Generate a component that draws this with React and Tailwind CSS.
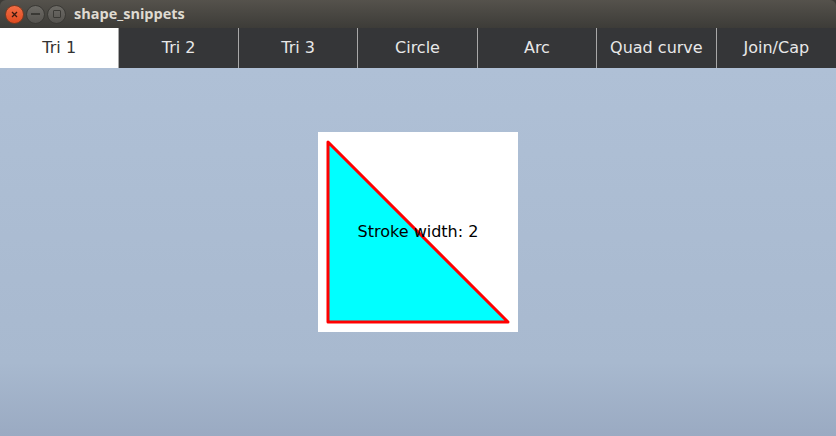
import React from "react";

const tabs = ["Tri 1", "Tri 2", "Tri 3", "Circle", "Arc", "Quad curve", "Join/Cap"];

export default function App() {
  return (
    <div className="w-[836px] h-[436px] flex flex-col overflow-hidden bg-[#3c3b37]" style={{ fontFamily: '"DejaVu Sans", sans-serif' }}>
      <div className="h-[28px] flex items-center pl-[5px] rounded-t-[6px] bg-gradient-to-b from-[#55524c] to-[#3d3c38]">
        <div className="flex items-center gap-[2px]">
          <div className="w-[19px] h-[19px] rounded-full bg-gradient-to-b from-[#f26d44] to-[#df4a1e] border border-[#7a3a22] flex items-center justify-center">
            <svg width="9" height="9" viewBox="0 0 9 9"><path d="M2 2 L7 7 M7 2 L2 7" stroke="#3a1a10" strokeWidth="1.3" /></svg>
          </div>
          <div className="w-[19px] h-[19px] rounded-full bg-gradient-to-b from-[#6d6b66] to-[#55534f] border border-[#3a3935] flex items-center justify-center">
            <div className="w-[9px] h-[2px] bg-[#3a3935]" />
          </div>
          <div className="w-[19px] h-[19px] rounded-full bg-gradient-to-b from-[#6d6b66] to-[#55534f] border border-[#3a3935] flex items-center justify-center">
            <div className="w-[8px] h-[8px] border border-[#3a3935] rounded-[1px]" />
          </div>
        </div>
        <span className="ml-[8px] text-[14.5px] font-bold text-[#dfdbd2] leading-none" style={{ fontFamily: '"Open Sans", sans-serif' }}>shape_snippets</span>
      </div>
      <div className="h-[40px] grid grid-cols-7 bg-[#353638]">
        {tabs.map((t, i) => (
          <div
            key={t}
            className={
              i === 0
                ? "flex items-center justify-center bg-white text-[#333] text-[16px] border-r border-[#a8a8a8]"
                : i < 6
                ? "flex items-center justify-center text-[#e8e8e8] text-[16px] border-r border-[#a8a8a8]"
                : "flex items-center justify-center text-[#e8e8e8] text-[16px]"
            }
          >
            {t}
          </div>
        ))}
      </div>
      <div className="flex-1 bg-[linear-gradient(to_bottom,#afc0d6_0%,#a8b9cf_80%,#9aaac2_100%)] flex justify-center pt-[64px]">
        <div className="relative w-[200px] h-[200px] bg-white">
          <svg width="200" height="200" className="absolute inset-0">
            <polygon points="10,10 10,190 190,190" fill="#00ffff" stroke="#ff0000" strokeWidth="3" strokeLinejoin="round" />
          </svg>
          <div className="absolute left-0 right-0 top-[90px] text-center text-[16px] text-black leading-[19px]">Stroke width: 2</div>
        </div>
      </div>
    </div>
  );
}
